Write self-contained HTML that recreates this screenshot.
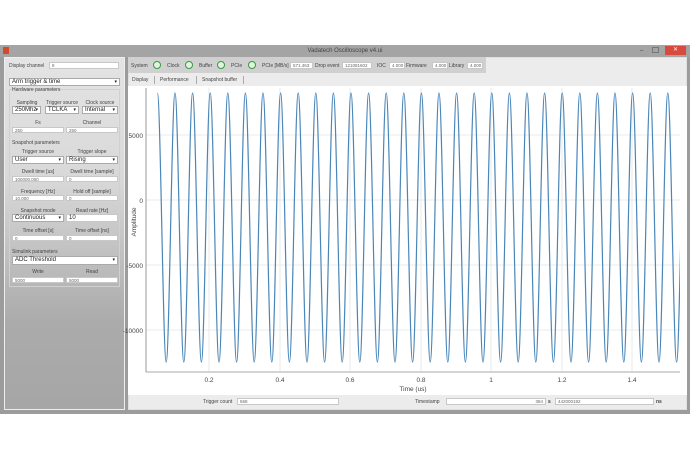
<!DOCTYPE html>
<html><head><meta charset="utf-8"><style>
*{margin:0;padding:0;box-sizing:border-box}
body{width:690px;height:460px;background:#fff;position:relative;overflow:hidden;font-family:"Liberation Sans",sans-serif;font-size:5px;color:#333}
.a{position:absolute}
.in{position:absolute;background:#fff;border:1px solid #c8c8c8;font-size:4.5px;line-height:5px;padding-left:2px;color:#666}
.cb{position:absolute;background:#fff;border:1px solid #aaa;font-size:6px;line-height:7px;padding-left:2px;color:#222}
.cb:after{content:"▾";position:absolute;right:2px;top:0;font-size:5px}
.l{position:absolute;font-size:5px;color:#444;text-align:center}
.led{position:absolute;width:8px;height:8px;border-radius:50%;border:1.5px solid #3a9a3a;background:#dff5df;top:61px}
</style></head><body>
<div class="a" style="left:0;top:45px;width:690px;height:369px;background:#9c9c9c"></div>
<div class="a" style="left:0;top:45px;width:690px;height:12px;background:#a4a4a4"></div>
<div class="a" style="left:3px;top:47px;width:6px;height:7px;background:#d24a2a"></div>
<div class="a" style="left:0;top:46px;width:690px;text-align:center;font-size:6px;color:#444;line-height:10px">Vadatech Oscilloscope v4.ui</div>
<div class="a" style="left:640px;top:48px;font-size:6px;color:#444">–</div>
<div class="a" style="left:652px;top:47px;width:7px;height:6px;border:1px solid #777"></div>
<div class="a" style="left:665px;top:46px;width:21px;height:9px;background:#d84a3e;color:#fff;font-size:6px;text-align:center;line-height:9px">✕</div>
<div class="a" style="left:4px;top:57px;width:121px;height:353px;background:linear-gradient(#e4e4e4,#d8d8d8 35%,#ababab 75%,#a6a6a6);border:1px solid #eee"></div>
<div class="l" style="left:9px;top:63px">Display channel</div>
<div class="in" style="left:49px;top:62px;width:70px;height:7px">8</div>
<div class="cb" style="left:9px;top:78px;width:111px;height:8px">Arm trigger &amp; time</div>
<div class="a" style="left:9px;top:89px;width:111px;height:198px;border:1px solid #d0d0d0"></div>
<div class="l" style="left:12px;top:87px">Hardware parameters</div>
<div class="l" style="left:12px;top:100px;width:30px">Sampling</div>
<div class="l" style="left:45px;top:100px;width:34px">Trigger source</div>
<div class="l" style="left:82px;top:100px;width:36px">Clock source</div>
<div class="cb" style="left:12px;top:106px;width:29px;height:8px">250Mhz</div>
<div class="cb" style="left:45px;top:106px;width:34px;height:8px">TCLKA</div>
<div class="cb" style="left:82px;top:106px;width:36px;height:8px">Internal</div>
<div class="l" style="left:12px;top:120px;width:52px">Fs</div>
<div class="l" style="left:66px;top:120px;width:52px">Channel</div>
<div class="in" style="left:12px;top:127px;width:52px;height:6px">250</div>
<div class="in" style="left:66px;top:127px;width:52px;height:6px">250</div>
<div class="l" style="left:12px;top:140px">Snapshot parameters</div>
<div class="l" style="left:12px;top:149px;width:52px">Trigger source</div>
<div class="l" style="left:66px;top:149px;width:52px">Trigger slope</div>
<div class="cb" style="left:12px;top:156px;width:52px;height:8px">User</div>
<div class="cb" style="left:66px;top:156px;width:52px;height:8px">Rising</div>
<div class="l" style="left:12px;top:169px;width:52px">Dwell time [us]</div>
<div class="l" style="left:66px;top:169px;width:52px">Dwell time [sample]</div>
<div class="in" style="left:12px;top:176px;width:52px;height:6px">100000.000</div>
<div class="in" style="left:66px;top:176px;width:52px;height:6px">0</div>
<div class="l" style="left:12px;top:189px;width:52px">Frequency [Hz]</div>
<div class="l" style="left:66px;top:189px;width:52px">Hold off [sample]</div>
<div class="in" style="left:12px;top:195px;width:52px;height:6px">10.000</div>
<div class="in" style="left:66px;top:195px;width:52px;height:6px">0</div>
<div class="l" style="left:12px;top:208px;width:52px">Snapshot mode</div>
<div class="l" style="left:66px;top:208px;width:52px">Read rate [Hz]</div>
<div class="cb" style="left:12px;top:214px;width:52px;height:8px">Continuous</div>
<div class="in" style="left:66px;top:214px;width:52px;height:8px;font-size:6px;line-height:7px;color:#222">10</div>
<div class="l" style="left:12px;top:228px;width:52px">Time offset [s]</div>
<div class="l" style="left:66px;top:228px;width:52px">Time offset [ns]</div>
<div class="in" style="left:12px;top:235px;width:52px;height:6px">0</div>
<div class="in" style="left:66px;top:235px;width:52px;height:6px">0</div>
<div class="l" style="left:12px;top:249px">Simulink parameters</div>
<div class="cb" style="left:12px;top:256px;width:106px;height:9px">ADC Threshold</div>
<div class="l" style="left:12px;top:269px;width:52px">Write</div>
<div class="l" style="left:66px;top:269px;width:52px">Read</div>
<div class="in" style="left:12px;top:277px;width:52px;height:6px">5000</div>
<div class="in" style="left:66px;top:277px;width:52px;height:6px">5000</div>
<div class="a" style="left:128px;top:57px;width:559px;height:353px;background:#ececec;border:1px solid #e0e0e0"></div>
<div class="a" style="left:128px;top:57px;width:358px;height:16px;background:#d0d0d0"></div>
<div class="l" style="left:131px;top:63px">System</div>
<div class="led" style="left:153px"></div>
<div class="l" style="left:167px;top:63px">Clock</div>
<div class="led" style="left:185px"></div>
<div class="l" style="left:199px;top:63px">Buffer</div>
<div class="led" style="left:217px"></div>
<div class="l" style="left:231px;top:63px">PCIe</div>
<div class="led" style="left:248px"></div>
<div class="l" style="left:262px;top:63px">PCIe [MB/s]</div>
<div class="in" style="left:290px;top:62px;width:23px;height:7px">571.463</div>
<div class="l" style="left:315px;top:63px">Drop event</div>
<div class="in" style="left:342px;top:62px;width:30px;height:7px">121081602</div>
<div class="l" style="left:377px;top:63px">IOC</div>
<div class="in" style="left:389px;top:62px;width:16px;height:7px">4.000</div>
<div class="l" style="left:406px;top:63px">Firmware</div>
<div class="in" style="left:432px;top:62px;width:16px;height:7px">4.000</div>
<div class="l" style="left:449px;top:63px">Library</div>
<div class="in" style="left:467px;top:62px;width:16px;height:7px">4.000</div>
<div class="l" style="left:132px;top:77px">Display</div>
<div class="a" style="left:154px;top:76px;width:1px;height:8px;background:#aaa"></div>
<div class="l" style="left:160px;top:77px">Performance</div>
<div class="a" style="left:196px;top:76px;width:1px;height:8px;background:#aaa"></div>
<div class="l" style="left:202px;top:77px">Snapshot buffer</div>
<div class="a" style="left:243px;top:76px;width:1px;height:8px;background:#aaa"></div>
<div class="a" style="left:128px;top:86px;width:559px;height:309px;background:#fff"></div>
<svg class="a" style="left:0;top:0" width="690" height="460">
<defs><clipPath id="c"><rect x="146" y="87" width="534" height="284"/></clipPath></defs>
<g stroke="#e4e4e4" stroke-width="0.8">
<line x1="146" y1="135" x2="680" y2="135"/><line x1="146" y1="200" x2="680" y2="200"/><line x1="146" y1="265" x2="680" y2="265"/><line x1="146" y1="330" x2="680" y2="330"/>
<line x1="209" y1="88" x2="209" y2="371"/><line x1="280" y1="88" x2="280" y2="371"/><line x1="350" y1="88" x2="350" y2="371"/><line x1="421" y1="88" x2="421" y2="371"/><line x1="491" y1="88" x2="491" y2="371"/><line x1="562" y1="88" x2="562" y2="371"/><line x1="632" y1="88" x2="632" y2="371"/>
</g>
<g stroke="#555" stroke-width="0.6"><line x1="146" y1="88" x2="146" y2="372"/><line x1="146" y1="372" x2="680" y2="372"/></g>
<path clip-path="url(#c)" fill="none" stroke="#4a86b8" stroke-width="1.2" d="M157.4,93 c3.1,0 5.7,269 8.8,269 c3.1,0 5.7,-269 8.8,-269 c3.1,0 5.7,269 8.8,269 c3.1,0 5.7,-269 8.8,-269 c3.1,0 5.7,269 8.8,269 c3.1,0 5.7,-269 8.8,-269 c3.1,0 5.7,269 8.8,269 c3.1,0 5.7,-269 8.8,-269 c3.1,0 5.7,269 8.8,269 c3.1,0 5.7,-269 8.8,-269 c3.1,0 5.7,269 8.8,269 c3.1,0 5.7,-269 8.8,-269 c3.1,0 5.7,269 8.8,269 c3.1,0 5.7,-269 8.8,-269 c3.1,0 5.7,269 8.8,269 c3.1,0 5.7,-269 8.8,-269 c3.1,0 5.7,269 8.8,269 c3.1,0 5.7,-269 8.8,-269 c3.1,0 5.7,269 8.8,269 c3.1,0 5.7,-269 8.8,-269 c3.1,0 5.7,269 8.8,269 c3.1,0 5.7,-269 8.8,-269 c3.1,0 5.7,269 8.8,269 c3.1,0 5.7,-269 8.8,-269 c3.1,0 5.7,269 8.8,269 c3.1,0 5.7,-269 8.8,-269 c3.1,0 5.7,269 8.8,269 c3.1,0 5.7,-269 8.8,-269 c3.1,0 5.7,269 8.8,269 c3.1,0 5.7,-269 8.8,-269 c3.1,0 5.7,269 8.8,269 c3.1,0 5.7,-269 8.8,-269 c3.1,0 5.7,269 8.8,269 c3.1,0 5.7,-269 8.8,-269 c3.1,0 5.7,269 8.8,269 c3.1,0 5.7,-269 8.8,-269 c3.1,0 5.7,269 8.8,269 c3.1,0 5.7,-269 8.8,-269 c3.1,0 5.7,269 8.8,269 c3.1,0 5.7,-269 8.8,-269 c3.1,0 5.7,269 8.8,269 c3.1,0 5.7,-269 8.8,-269 c3.1,0 5.7,269 8.8,269 c3.1,0 5.7,-269 8.8,-269 c3.1,0 5.7,269 8.8,269 c3.1,0 5.7,-269 8.8,-269 c3.1,0 5.7,269 8.8,269 c3.1,0 5.7,-269 8.8,-269 c3.1,0 5.7,269 8.8,269 c3.1,0 5.7,-269 8.8,-269 c3.1,0 5.7,269 8.8,269 c3.1,0 5.7,-269 8.8,-269 c3.1,0 5.7,269 8.8,269 c3.1,0 5.7,-269 8.8,-269 c3.1,0 5.7,269 8.8,269 c3.1,0 5.7,-269 8.8,-269 c3.1,0 5.7,269 8.8,269 c3.1,0 5.7,-269 8.8,-269 c3.1,0 5.7,269 8.8,269 c3.1,0 5.7,-269 8.8,-269 c3.1,0 5.7,269 8.8,269 c3.1,0 5.7,-269 8.8,-269"/>
<g font-family="Liberation Sans" font-size="6.5" fill="#444" text-anchor="end">
<text x="143" y="138">5000</text><text x="143" y="203">0</text><text x="143" y="268">-5000</text><text x="143" y="333">-10000</text></g>
<g font-family="Liberation Sans" font-size="6.5" fill="#444" text-anchor="middle">
<text x="209" y="382">0.2</text><text x="280" y="382">0.4</text><text x="350" y="382">0.6</text><text x="421" y="382">0.8</text><text x="491" y="382">1</text><text x="562" y="382">1.2</text><text x="632" y="382">1.4</text>
<text x="413" y="391">Time (us)</text>
<text transform="translate(136,222) rotate(-90)">Amplitude</text></g>
</svg>
<div class="l" style="left:203px;top:399px">Trigger count</div>
<div class="in" style="left:237px;top:398px;width:102px;height:7px">568</div>
<div class="l" style="left:415px;top:399px">Timestamp</div>
<div class="in" style="left:446px;top:398px;width:100px;height:7px;text-align:right;padding-right:2px">384</div>
<div class="l" style="left:548px;top:399px;font-weight:bold">s</div>
<div class="in" style="left:555px;top:398px;width:99px;height:7px">442000192</div>
<div class="l" style="left:656px;top:399px;font-weight:bold">ns</div>
</body></html>
